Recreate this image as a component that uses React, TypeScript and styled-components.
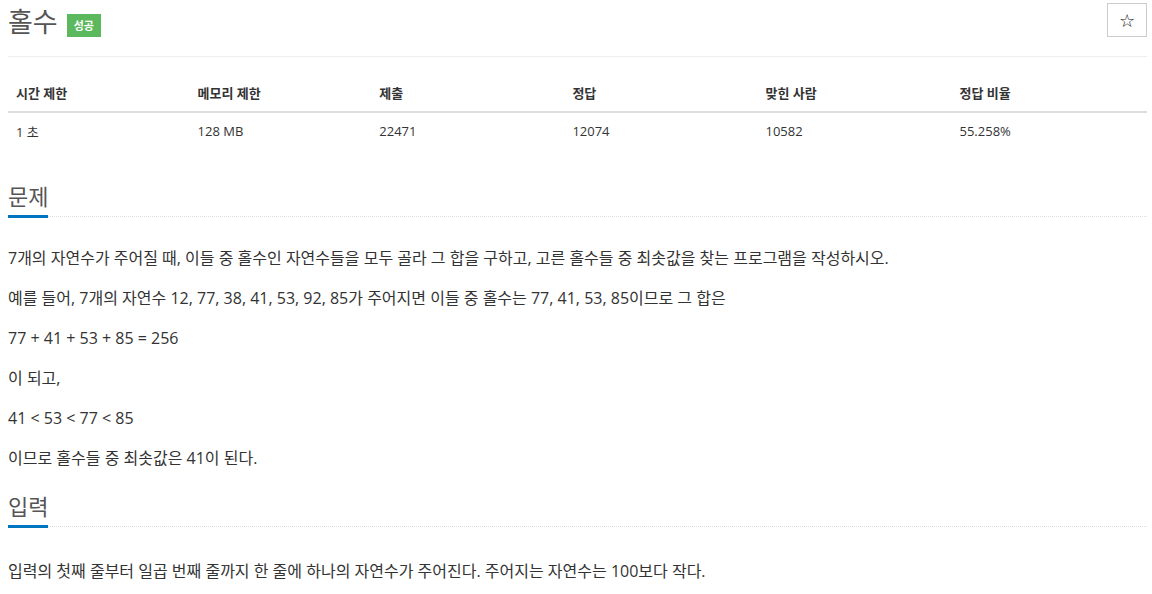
import React from "react";
import styled, { createGlobalStyle } from "styled-components";

const Global = createGlobalStyle`
  html, body { margin: 0; padding: 0; background: #fff; }
  body { font-family: "Open Sans", "Noto Sans CJK KR", sans-serif; color: #333; }
`;

const Page = styled.div`
  padding: 0 5px 0 8px;
  width: 1139px;
`;

const Header = styled.div`
  display: flex;
  align-items: flex-start;
  justify-content: space-between;
  padding-bottom: 10px;
  border-bottom: 1px solid #eee;
  height: 46px;
`;

const Title = styled.h1`
  margin: 0;
  padding-top: 2px;
  display: flex;
  align-items: center;
  gap: 9px;
  font-size: 27px;
  font-weight: 400;
  color: #555;
  line-height: 40px;
`;

const Label = styled.span<{ $bg: string }>`
  display: inline-block;
  background: ${(p) => p.$bg};
  color: #fff;
  font-size: 11px;
  font-weight: 700;
  padding: 0 7px;
  height: 23px;
  line-height: 23px;
  margin-top: 6px;
`;

const StarButton = styled.button`
  margin-top: 3px;
  width: 40px;
  height: 34px;
  background: #fff;
  border: 1px solid #ccc;
  font-size: 18px;
  color: #111;
  padding: 0;
  cursor: pointer;
  font-family: "DejaVu Sans", sans-serif;
`;

const Table = styled.table`
  margin-top: 26px;
  width: 100%;
  border-collapse: collapse;
  font-size: 13px;
`;

const Th = styled.th<{ $w: number }>`
  width: ${(p) => p.$w}px;
  text-align: left;
  font-weight: 700;
  color: #333;
  padding: 0 8px;
  height: 28px;
  vertical-align: top;
  border-bottom: 2px solid #ddd;
`;

const Td = styled.td`
  padding: 0 8px;
  height: 36px;
  color: #333;
  vertical-align: middle;
`;

const Section = styled.section<{ $top: number }>`
  margin-top: ${(p) => p.$top}px;
`;

const Headline = styled.div`
  border-bottom: 1px dotted #ddd;
`;

const HeadlineText = styled.h2`
  margin: 0 0 -2px;
  font-size: 22px;
  font-weight: 400;
  color: #555;
  line-height: 32px;
  display: inline-block;
  white-space: nowrap;
  border-bottom: 3px solid #0076c0;
  padding-bottom: 3px;
  min-width: 40px;
`;

const Body = styled.div<{ $pad: number }>`
  padding-top: ${(p) => p.$pad}px;
`;

const P = styled.p`
  margin: 0 0 10px;
  font-size: 16px;
  line-height: 30px;
  color: #333;
`;

const limits = [
  { h: "시간 제한", v: "1 초", w: 183 },
  { h: "메모리 제한", v: "128 MB", w: 182 },
  { h: "제출", v: "22471", w: 193 },
  { h: "정답", v: "12074", w: 193 },
  { h: "맞힌 사람", v: "10582", w: 194 },
  { h: "정답 비율", v: "55.258%", w: 194 },
];

export default function App() {
  return (
    <Page>
      <Global />
      <Header>
        <Title>
          홀수
          <Label $bg="#5cb85c">성공</Label>
        </Title>
        <StarButton aria-label="star">☆</StarButton>
      </Header>
      <Table>
        <thead>
          <tr>
            {limits.map((l) => (
              <Th key={l.h} $w={l.w}>{l.h}</Th>
            ))}
          </tr>
        </thead>
        <tbody>
          <tr>
            {limits.map((l) => (
              <Td key={l.h}>{l.v}</Td>
            ))}
          </tr>
        </tbody>
      </Table>
      <Section $top={31}>
        <Headline>
          <HeadlineText>문제</HeadlineText>
        </Headline>
        <Body $pad={26}>
          <P>7개의 자연수가 주어질 때, 이들 중 홀수인 자연수들을 모두 골라 그 합을 구하고, 고른 홀수들 중 최솟값을 찾는 프로그램을 작성하시오.</P>
          <P>예를 들어, 7개의 자연수 12, 77, 38, 41, 53, 92, 85가 주어지면 이들 중 홀수는 77, 41, 53, 85이므로 그 합은</P>
          <P>77 + 41 + 53 + 85 = 256</P>
          <P>이 되고,</P>
          <P>41 &lt; 53 &lt; 77 &lt; 85</P>
          <P>이므로 홀수들 중 최솟값은 41이 된다.</P>
        </Body>
      </Section>
      <Section $top={17}>
        <Headline>
          <HeadlineText>입력</HeadlineText>
        </Headline>
        <Body $pad={29}>
          <P>입력의 첫째 줄부터 일곱 번째 줄까지 한 줄에 하나의 자연수가 주어진다. 주어지는 자연수는 100보다 작다.</P>
        </Body>
      </Section>
    </Page>
  );
}
